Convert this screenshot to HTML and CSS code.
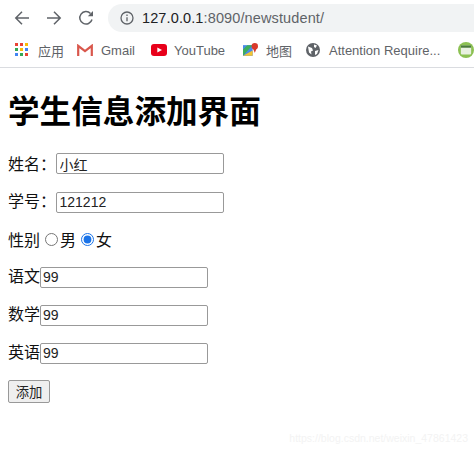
FILE: index.html
```
<!DOCTYPE html>
<html lang="zh">
<head>
<meta charset="utf-8">
<title>学生信息添加界面</title>
<link rel="stylesheet" href="styles.css">
</head>
<body>
<header class="chrome">
  <div class="toolbar">
    <svg class="nav" viewBox="0 0 16 16"><path d="M15 8H1.800M8 1.800 1.800 8 8 14.200"/></svg>
    <svg class="nav" viewBox="0 0 16 16"><path d="M1 8h13.200M8 1.800 14.200 8 8 14.200"/></svg>
    <svg class="nav" viewBox="0 0 16 16"><path d="M14 9.500A6.200 6.200 0 1 1 12.500 3.500"/><path class="fill" d="M9.800 6.200H15V1z"/></svg>
    <div class="omnibox">
      <svg class="info" viewBox="0 0 14 14"><circle cx="7" cy="7" r="6"/><path d="M7 6.200v4M7 3.500v1.400"/></svg>
      <span class="url"><span class="host">127.0.0.1</span>:8090/newstudent/</span>
    </div>
  </div>
  <nav class="bookmarks">
    <a class="bm bm-apps">
      <svg class="ico" viewBox="0 0 14 14">
        <rect x="0" y="0" width="3" height="3" fill="#ea4335"/><rect x="5" y="0" width="3" height="3" fill="#ea4335"/><rect x="10" y="0" width="3" height="3" fill="#fbbc05"/>
        <rect x="0" y="5" width="3" height="3" fill="#34a853"/><rect x="5" y="5" width="3" height="3" fill="#fbbc05"/><rect x="10" y="5" width="3" height="3" fill="#4285f4"/>
        <rect x="0" y="10" width="3" height="3" fill="#4285f4"/><rect x="5" y="10" width="3" height="3" fill="#34a853"/><rect x="10" y="10" width="3" height="3" fill="#ea4335"/>
      </svg>应用</a>
    <a class="bm bm-gmail">
      <svg class="ico ico-g" viewBox="0 0 16 12"><path fill="none" stroke="#d9574c" stroke-width="2.200" d="M1.200 12V1.800L8 7l6.800-5.200V12"/></svg>Gmail</a>
    <a class="bm bm-yt">
      <svg class="ico ico-y" viewBox="0 0 16 12"><rect width="16" height="12" rx="3" fill="#e8001a"/><path d="M6.300 3.400 11 6 6.300 8.600z" fill="#fff"/></svg>YouTube</a>
    <a class="bm bm-map">
      <svg class="ico ico-m" viewBox="0 0 14 14"><path d="M0 2h9v10H0z" fill="#4a8ae8"/><path d="M0 12 9 2H4L0 6z" fill="#3cae5c"/><path d="M0 12h9V7z" fill="#f4c430"/><circle cx="11" cy="3" r="3" fill="#d9392b"/><path d="M9 4.500 11 9l2-4.500z" fill="#d9392b"/></svg>地图</a>
    <a class="bm bm-att">
      <svg class="ico" viewBox="0 0 14 14"><circle cx="7" cy="7" r="7" fill="#5f6368"/><path d="M2 3.500 6 5l1 2.500-2 1 .5 3L3 9.500zM8 1.500l3 1-1.500 2.500L8 4zM9 8l3.500-1L11 11l-2 1z" fill="#fff"/></svg>Attention Require...</a>
    <a class="bm bm-ext">
      <svg class="ico ico-x" viewBox="0 0 14 14"><circle cx="7" cy="7" r="7" fill="#8cc152"/><rect x="2.500" y="3" width="9" height="8" rx="1" fill="#e8f0e0"/><rect x="2.500" y="3" width="9" height="2" fill="#4a7a3a"/></svg></a>
  </nav>
</header>
<main class="page">
  <h1>学生信息添加界面</h1>
  <form>
    <p class="row-a"><label>姓名：</label><input class="wide" type="text" value="小红"></p>
    <p><label>学号：</label><input class="wide" type="text" value="121212"></p>
    <p class="row-c">性别 <input type="radio" name="sex">男 <input type="radio" name="sex" checked>女</p>
    <p class="row-d"><label>语文</label><input type="text" value="99"></p>
    <p><label>数学</label><input type="text" value="99"></p>
    <p><label>英语</label><input type="text" value="99"></p>
    <p><button type="button">添加</button></p>
  </form>
</main>
<footer class="mark">https://blog.csdn.net/weixin_47861423</footer>
</body>
</html>
```
FILE: styles.css
```
* { box-sizing: border-box; }
html, body { margin: 0; padding: 0; }
body {
  width: 474px;
  height: 450px;
  overflow: hidden;
  position: relative;
  background: #fff;
  color: #111;
  font-family: "Liberation Sans", "Noto Sans CJK SC", sans-serif;
  font-size: 16px;
}
.chrome { height: 68px; border-bottom: 1px solid #dadce0; }
.toolbar {
  height: 32px;
  padding: 4px 0 0 14px;
  display: flex;
  align-items: center;
}
.nav {
  width: 16px;
  height: 16px;
  margin-right: 16px;
  fill: none;
  stroke: #5f6368;
  stroke-width: 1.500;
  flex: none;
}
.nav .fill { fill: #5f6368; stroke: none; }
.omnibox {
  flex: 1;
  height: 28px;
  margin-left: -2px;
  background: #f1f3f4;
  border-radius: 14px 0 0 14px;
  display: flex;
  align-items: center;
  padding-left: 12px;
}
.info {
  width: 14px;
  height: 14px;
  fill: none;
  stroke: #5f6368;
  stroke-width: 1.300;
  margin-right: 8px;
}
.url { font-size: 14.500px; color: #5f6368; letter-spacing: 0.120px; }
.host { color: #202124; }
.bookmarks {
  height: 35px;
  padding: 1px 0 0 15px;
  display: flex;
  align-items: center;
  font-size: 13px;
  color: #5f6368;
  white-space: nowrap;
}
.bm { display: flex; align-items: center; flex: none; }
.ico { width: 14px; height: 14px; margin-right: 9px; flex: none; }
.ico-g { width: 16px; height: 12px; margin-right: 8px; }
.ico-y { width: 16px; height: 12px; margin-right: 7px; }
.ico-x { width: 16px; height: 16px; margin-right: 0; }
.bm-apps { width: 62px; }
.bm-gmail { width: 74px; }
.bm-yt { width: 92px; }
.bm-map { width: 63px; }
.bm-att { width: 152px; }
.ico-m { width: 15px; height: 15px; margin-right: 8px; }
.page { padding: 0 8px; }
h1 {
  margin: 21px 0 0;
  font-size: 31.600px;
  line-height: 46px;
  font-weight: 700;
  color: #000;
  white-space: nowrap;
}
p {
  margin: 16px 0 0;
  height: 22px;
  line-height: 22px;
  white-space: nowrap;
}
.row-a { margin-top: 18px; }
.row-c { margin-top: 17px; }
.row-d { margin-top: 14px; }
input[type=text] {
  width: 168px;
  height: 21px;
  padding: 1px 2px;
  border: 1px solid #999;
  border-radius: 2px;
  font: 14px "Liberation Sans", "Noto Sans CJK SC", sans-serif;
  color: #222;
  vertical-align: baseline;
}
input.wide { padding: 1px 3px; margin-left: -0.500px; }
input[type=radio] {
  width: 13px;
  height: 13px;
  margin: 3px 2px 0 0.600px;
  vertical-align: baseline;
  accent-color: #1a73e8;
}
button {
  height: 23px;
  width: 42px;
  padding: 1px 6px;
  border: 1px solid #999;
  border-radius: 2px;
  background: #efefef;
  font: 13.333px "Liberation Sans", "Noto Sans CJK SC", sans-serif;
  color: #222;
}
.mark {
  position: absolute;
  right: 6px;
  bottom: 6px;
  font-size: 10.500px;
  color: #f3f3f3;
}
```
